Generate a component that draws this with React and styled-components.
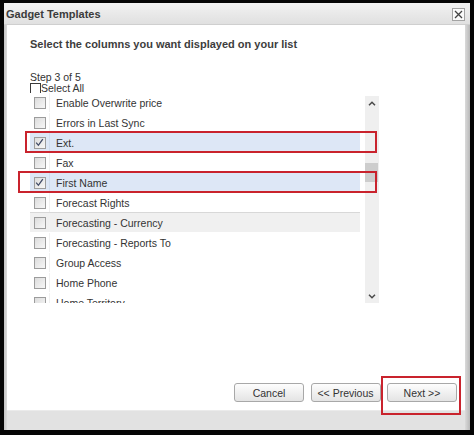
import React from "react";
import styled, { createGlobalStyle } from "styled-components";

const GlobalStyle = createGlobalStyle`
  html, body {
    margin: 0;
    padding: 0;
    background: #050505;
  }
  body {
    width: 474px;
    height: 435px;
    overflow: hidden;
    font-family: "Liberation Sans", Arial, sans-serif;
  }
`;

const Frame = styled.div`
  box-sizing: border-box;
  width: 474px;
  height: 435px;
  padding: 3px 4px 5px 4px;
  background: #050505;
`;

const Dialog = styled.div`
  height: 100%;
  display: flex;
  flex-direction: column;
  background: linear-gradient(90deg, #c4c4c4, #dadada 3px, #dadada calc(100% - 5px), #b8b8b8);
`;

const TitleBar = styled.div`
  flex: none;
  height: 21px;
  display: flex;
  align-items: center;
  justify-content: space-between;
  padding: 0 5px 0 2px;
  background: linear-gradient(#f2f2f2, #e0e0e0);
  border-bottom: 1px solid #cfcfcf;
`;

const Title = styled.span`
  font-size: 11px;
  font-weight: bold;
  color: #3b3b3b;
  padding-top: 1px;
`;

const CloseBox = styled.span`
  box-sizing: border-box;
  width: 13px;
  height: 13px;
  display: flex;
  align-items: center;
  justify-content: center;
  border: 1px solid #a3a3a3;
  background: #fafafa;
  margin-top: 2px;
`;

const Body = styled.div`
  flex: 1;
  display: flex;
  flex-direction: column;
  margin: 0 5px 0 3px;
  padding: 13px 8px 8px 23px;
  background: #fff;
  color: #333;
`;

const Heading = styled.div`
  font-size: 11px;
  font-weight: bold;
  line-height: 13px;
  color: #3d3d3d;
`;

const Step = styled.div`
  margin-top: 20px;
  font-size: 10.5px;
  line-height: 12px;
`;

const SelectAll = styled.label`
  display: flex;
  align-items: flex-start;
  font-size: 10.5px;
  line-height: 10px;
  height: 10px;
`;

const PlainBox = styled.span`
  box-sizing: border-box;
  width: 11px;
  height: 11px;
  border: 1px solid #3a3a3a;
  background: #fff;
  flex: none;
`;

const ListArea = styled.div`
  display: flex;
  width: 350px;
  height: 210px;
`;

const Rows = styled.div`
  width: 330px;
  overflow-x: visible;
  overflow-y: clip;
`;

const Row = styled.div`
  position: relative;
  display: grid;
  grid-template-columns: 20px 1fr;
  height: 19px;
  border-top: 1px solid ${(p) => (p.$hover ? "#d8d8d8" : "transparent")};
  border-bottom: 1px solid ${(p) => (p.$hover ? "#d2d2d2" : "#e8e8e8")};
  margin-top: -1px;
  background: ${(p) => (p.$selected ? "#dde7f6" : p.$hover ? "#f0f0f0" : "#fff")};
  font-size: 10.5px;
  color: #333;
`;

const CheckCell = styled.span`
  display: flex;
  align-items: center;
  justify-content: center;
  border-right: 1px solid ${(p) => (p.$selected ? "#cfdcee" : "#f1f1f1")};
`;

const Box = styled.span`
  box-sizing: border-box;
  width: 12px;
  height: 12px;
  border: 1px solid #9c9c9c;
  background: linear-gradient(135deg, #dcdcdc, #f7f7f7);
  display: flex;
  align-items: center;
  justify-content: center;
`;

const Label = styled.span`
  display: flex;
  align-items: center;
  padding-left: 6px;
  white-space: nowrap;
`;

const Highlight = styled.span`
  position: absolute;
  left: ${(p) => p.$left}px;
  right: -17px;
  top: -2px;
  bottom: -1px;
  border: 2px solid #c9232d;
  pointer-events: none;
  z-index: 2;
`;

const ScrollBar = styled.div`
  margin: 3px 0 0 5px;
  width: 14px;
  height: 207px;
  background: #efefef;
  display: flex;
  flex-direction: column;
  align-items: center;
`;

const Arrow = styled.span`
  height: 14px;
  display: flex;
  align-items: center;
  justify-content: center;
`;

const Track = styled.span`
  flex: 1;
  width: 100%;
  position: relative;
`;

const Thumb = styled.span`
  position: absolute;
  left: 0;
  right: 1px;
  top: 53px;
  height: 19px;
  background: #cdcdcd;
`;

const Buttons = styled.div`
  margin-top: auto;
  display: flex;
  justify-content: flex-end;
  gap: 6.5px;
`;

const Button = styled.button`
  position: relative;
  box-sizing: border-box;
  width: 70px;
  height: 19px;
  padding: 0;
  border: 1px solid #a8a8a8;
  border-radius: 3px;
  background: linear-gradient(#fdfdfd, #e4e4e4);
  font-family: "Liberation Sans", Arial, sans-serif;
  font-size: 10.5px;
  color: #333;
`;

const ButtonMark = styled.span`
  position: absolute;
  left: -7px;
  right: -5px;
  top: -8px;
  bottom: -14px;
  border: 2px solid #c9232d;
`;

const Footer = styled.div`
  flex: none;
  height: 19px;
  margin: 0 5px 0 3px;
  background: #e2e2e2;
  border-top: 1px solid #ebebeb;
`;

const columns = [
  { label: "Enable Overwrite price" },
  { label: "Errors in Last Sync" },
  { label: "Ext.", checked: true, mark: -5 },
  { label: "Fax" },
  { label: "First Name", checked: true, mark: -12 },
  { label: "Forecast Rights" },
  { label: "Forecasting - Currency", hover: true },
  { label: "Forecasting - Reports To" },
  { label: "Group Access" },
  { label: "Home Phone" },
  { label: "Home Territory" },
];

const Tick = () => (
  <svg width="9" height="9" viewBox="0 0 9 9">
    <path d="M1.2 4.6 L3.4 7.3 L7.8 1.2" fill="none" stroke="#3f4a66" strokeWidth="1.3" />
  </svg>
);

const Chevron = ({ up }) => (
  <svg width="8" height="5" viewBox="0 0 8 5">
    <path
      d={up ? "M1 4.2 L4 1.2 L7 4.2" : "M1 0.8 L4 3.8 L7 0.8"}
      fill="none"
      stroke="#4a4a4a"
      strokeWidth="1.5"
    />
  </svg>
);

export default function App() {
  return (
    <Frame>
      <GlobalStyle />
      <Dialog>
        <TitleBar>
          <Title>Gadget Templates</Title>
          <CloseBox>
            <svg width="9" height="9" viewBox="0 0 9 9">
              <path d="M1 1 L8 8 M8 1 L1 8" stroke="#444" strokeWidth="1.3" />
            </svg>
          </CloseBox>
        </TitleBar>
        <Body>
          <Heading>Select the columns you want displayed on your list</Heading>
          <Step>Step 3 of 5</Step>
          <SelectAll>
            <PlainBox />
            Select All
          </SelectAll>
          <ListArea>
            <Rows>
              {columns.map((c) => (
                <Row key={c.label} $selected={c.checked} $hover={c.hover}>
                  <CheckCell $selected={c.checked}>
                    <Box>{c.checked && <Tick />}</Box>
                  </CheckCell>
                  <Label>{c.label}</Label>
                  {c.mark !== undefined && <Highlight $left={c.mark} />}
                </Row>
              ))}
            </Rows>
            <ScrollBar>
              <Arrow>
                <Chevron up />
              </Arrow>
              <Track>
                <Thumb />
              </Track>
              <Arrow>
                <Chevron />
              </Arrow>
            </ScrollBar>
          </ListArea>
          <Buttons>
            <Button>Cancel</Button>
            <Button>&lt;&lt; Previous</Button>
            <Button>
              Next &gt;&gt;
              <ButtonMark />
            </Button>
          </Buttons>
        </Body>
        <Footer />
      </Dialog>
    </Frame>
  );
}
